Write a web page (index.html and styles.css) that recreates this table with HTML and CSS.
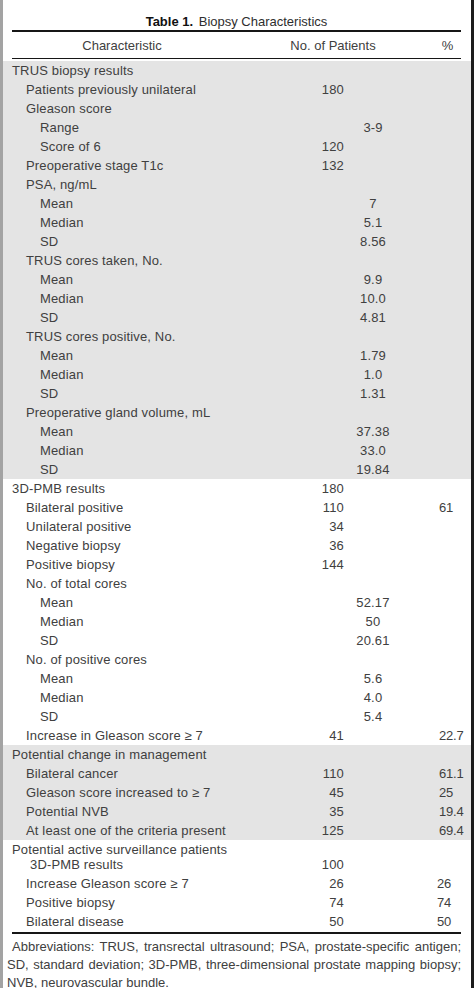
FILE: index.html
```html
<!DOCTYPE html>
<html lang="en">
<head>
<meta charset="utf-8">
<title>Table 1. Biopsy Characteristics</title>
<link rel="stylesheet" href="styles.css">
</head>
<body>
<div class="page">
  <div class="title"><b>Table 1.</b> Biopsy Characteristics</div>
  <div class="rule rule-top"></div>
  <div class="row head">
    <div class="lab">Characteristic</div>
    <div class="num">No. of Patients</div>
    <div class="pct">%</div>
  </div>
  <div class="rule rule-head"></div>

  <div class="sec shade first">
    <div class="row"><div class="lab">TRUS biopsy results</div><div class="num"></div><div class="pct"></div></div>
    <div class="row"><div class="lab l1">Patients previously unilateral</div><div class="num cnt">180</div><div class="pct"></div></div>
    <div class="row"><div class="lab l1">Gleason score</div><div class="num"></div><div class="pct"></div></div>
    <div class="row"><div class="lab l2">Range</div><div class="num sub">3-9</div><div class="pct"></div></div>
    <div class="row"><div class="lab l2">Score of 6</div><div class="num cnt">120</div><div class="pct"></div></div>
    <div class="row"><div class="lab l1">Preoperative stage T1c</div><div class="num cnt">132</div><div class="pct"></div></div>
    <div class="row"><div class="lab l1">PSA, ng/mL</div><div class="num"></div><div class="pct"></div></div>
    <div class="row"><div class="lab l2">Mean</div><div class="num sub">7</div><div class="pct"></div></div>
    <div class="row"><div class="lab l2">Median</div><div class="num sub">5.1</div><div class="pct"></div></div>
    <div class="row"><div class="lab l2">SD</div><div class="num sub">8.56</div><div class="pct"></div></div>
    <div class="row"><div class="lab l1">TRUS cores taken, No.</div><div class="num"></div><div class="pct"></div></div>
    <div class="row"><div class="lab l2">Mean</div><div class="num sub">9.9</div><div class="pct"></div></div>
    <div class="row"><div class="lab l2">Median</div><div class="num sub">10.0</div><div class="pct"></div></div>
    <div class="row"><div class="lab l2">SD</div><div class="num sub">4.81</div><div class="pct"></div></div>
    <div class="row"><div class="lab l1">TRUS cores positive, No.</div><div class="num"></div><div class="pct"></div></div>
    <div class="row"><div class="lab l2">Mean</div><div class="num sub">1.79</div><div class="pct"></div></div>
    <div class="row"><div class="lab l2">Median</div><div class="num sub">1.0</div><div class="pct"></div></div>
    <div class="row"><div class="lab l2">SD</div><div class="num sub">1.31</div><div class="pct"></div></div>
    <div class="row"><div class="lab l1">Preoperative gland volume, mL</div><div class="num"></div><div class="pct"></div></div>
    <div class="row"><div class="lab l2">Mean</div><div class="num sub">37.38</div><div class="pct"></div></div>
    <div class="row"><div class="lab l2">Median</div><div class="num sub">33.0</div><div class="pct"></div></div>
    <div class="row"><div class="lab l2">SD</div><div class="num sub">19.84</div><div class="pct"></div></div>
  </div>

  <div class="sec">
    <div class="row"><div class="lab">3D-PMB results</div><div class="num cnt">180</div><div class="pct"></div></div>
    <div class="row"><div class="lab l1">Bilateral positive</div><div class="num cnt">110</div><div class="pct">61</div></div>
    <div class="row"><div class="lab l1">Unilateral positive</div><div class="num cnt">34</div><div class="pct"></div></div>
    <div class="row"><div class="lab l1">Negative biopsy</div><div class="num cnt">36</div><div class="pct"></div></div>
    <div class="row"><div class="lab l1">Positive biopsy</div><div class="num cnt">144</div><div class="pct"></div></div>
    <div class="row"><div class="lab l1">No. of total cores</div><div class="num"></div><div class="pct"></div></div>
    <div class="row"><div class="lab l2">Mean</div><div class="num sub">52.17</div><div class="pct"></div></div>
    <div class="row"><div class="lab l2">Median</div><div class="num sub">50</div><div class="pct"></div></div>
    <div class="row"><div class="lab l2">SD</div><div class="num sub">20.61</div><div class="pct"></div></div>
    <div class="row"><div class="lab l1">No. of positive cores</div><div class="num"></div><div class="pct"></div></div>
    <div class="row"><div class="lab l2">Mean</div><div class="num sub">5.6</div><div class="pct"></div></div>
    <div class="row"><div class="lab l2">Median</div><div class="num sub">4.0</div><div class="pct"></div></div>
    <div class="row"><div class="lab l2">SD</div><div class="num sub">5.4</div><div class="pct"></div></div>
    <div class="row"><div class="lab l1">Increase in Gleason score ≥ 7</div><div class="num cnt">41</div><div class="pct">22.7</div></div>
  </div>

  <div class="sec shade">
    <div class="row"><div class="lab">Potential change in management</div><div class="num"></div><div class="pct"></div></div>
    <div class="row"><div class="lab l1">Bilateral cancer</div><div class="num cnt">110</div><div class="pct">61.1</div></div>
    <div class="row"><div class="lab l1">Gleason score increased to ≥ 7</div><div class="num cnt">45</div><div class="pct">25</div></div>
    <div class="row"><div class="lab l1">Potential NVB</div><div class="num cnt">35</div><div class="pct">19.4</div></div>
    <div class="row"><div class="lab l1">At least one of the criteria present</div><div class="num cnt">125</div><div class="pct">69.4</div></div>
  </div>

  <div class="sec last">
    <div class="row wrap"><div class="lab">Potential active surveillance patients<br><span class="cont">3D-PMB results</span></div><div class="num cnt">100</div><div class="pct"></div></div>
    <div class="row"><div class="lab l1">Increase Gleason score ≥ 7</div><div class="num cnt">26</div><div class="pct">26</div></div>
    <div class="row"><div class="lab l1">Positive biopsy</div><div class="num cnt">74</div><div class="pct">74</div></div>
    <div class="row"><div class="lab l1">Bilateral disease</div><div class="num cnt">50</div><div class="pct">50</div></div>
  </div>
  <div class="rule rule-bottom"></div>

  <p class="foot">Abbreviations: TRUS, transrectal ultrasound; PSA, prostate-specific antigen; SD, standard deviation; 3D-PMB, three-dimensional prostate mapping biopsy; NVB, neurovascular bundle.</p>
</div>
</body>
</html>
```

FILE: styles.css
```css
html, body {
  margin: 0;
  padding: 0;
  background: #ffffff;
}

body {
  font-family: "Liberation Sans", Arial, "Helvetica", sans-serif;
  font-size: 13px;
  color: #404040;
}

.page {
  width: 468px;
  height: 988px;
  border-left: 3px solid #a3a3a3;
  border-right: 3px solid #1c1c1c;
  background: #ffffff;
  overflow: hidden;
}

.title {
  height: 30px;
  box-sizing: border-box;
  padding-top: 14px;
  margin: 0 10px 0 9px;
  line-height: 15px;
  text-align: center;
  color: #2e2e2e;
}

.title b {
  font-weight: bold;
  color: #111111;
  margin-right: 2px;
}

.rule {
  margin: 0 10px 0 9px;
  background: #161616;
}

.rule-top {
  height: 2px;
}

.rule-head {
  height: 1px;
  margin-bottom: 2px;
}

.rule-bottom {
  height: 1.5px;
  margin-top: 1px;
}

.row {
  display: grid;
  grid-template-columns: 220px 202px 27px;
  padding-left: 9px;
  height: 19px;
  line-height: 19px;
  letter-spacing: 0.15px;
  white-space: nowrap;
}

.row.head {
  height: 26px;
  box-sizing: border-box;
  padding-top: 2px;
  line-height: 24px;
  letter-spacing: 0;
  text-align: center;
}

.sec.shade {
  background: #e4e4e4;
}

.lab.l1 {
  padding-left: 14px;
}

.lab.l2 {
  padding-left: 28px;
}

.num.cnt {
  text-align: right;
  padding-right: 90px;
}

.num.sub {
  text-align: center;
  padding-left: 80px;
}

.row:not(.head) .pct {
  padding-left: 5px;
  letter-spacing: -0.2px;
}

.sec.last .row .pct {
  padding-left: 3px;
}

.row.wrap {
  height: 34px;
  box-sizing: border-box;
  padding-top: 2px;
  padding-bottom: 2px;
  line-height: 15px;
  align-items: end;
}

.cont {
  padding-left: 18px;
}

.foot {
  margin: 0;
  padding: 4px 10px 0 4px;
  line-height: 18px;
  text-align: justify;
  text-indent: 5px;
  color: #404040;
}
```
